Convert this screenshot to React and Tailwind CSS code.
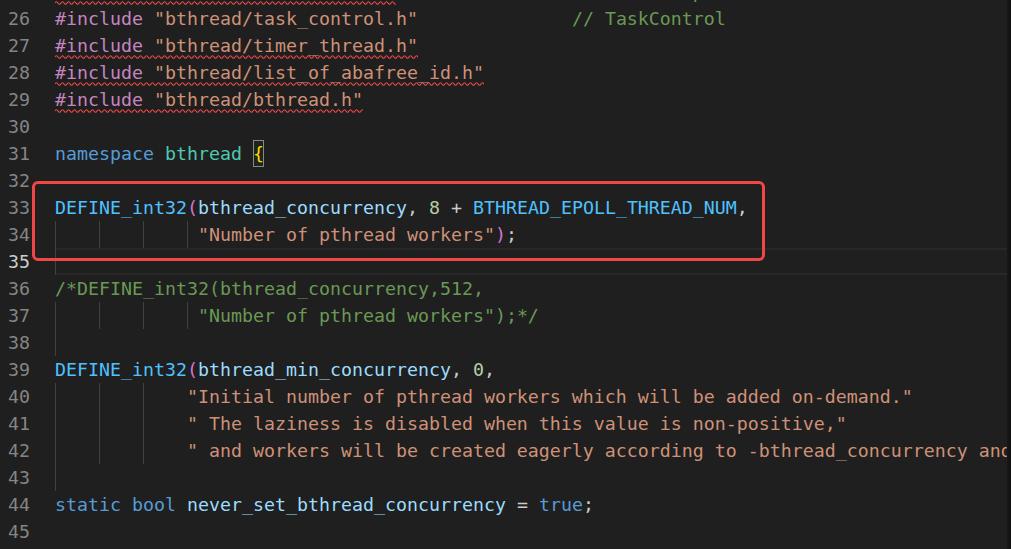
import React from "react";

const C = {
  inc: "text-[#C586C0]",
  str: "text-[#CE9178]",
  com: "text-[#6A9955]",
  kw: "text-[#569CD6]",
  ns: "text-[#4EC9B0]",
  gold: "text-[#FFD700]",
  orch: "text-[#DA70D6]",
  mac: "text-[#4FC1FF]",
  v: "text-[#9CDCFE]",
  num: "text-[#B5CEA8]",
  p: "text-[#CCCCCC]",
};

const lines = [
  { n: 25, hideNum: true, toks: [[C.p, "                                               "], [C.com, "// TaskGroup"]], sq: 31 },
  { n: 26, toks: [[C.inc, "#include "], [C.str, '"bthread/task_control.h"'], [C.p, "              "], [C.com, "// TaskControl"]] },
  { n: 27, toks: [[C.inc, "#include "], [C.str, '"bthread/timer_thread.h"']], sq: 33 },
  { n: 28, toks: [[C.inc, "#include "], [C.str, '"bthread/list_of_abafree_id.h"']], sq: 39 },
  { n: 29, toks: [[C.inc, "#include "], [C.str, '"bthread/bthread.h"']], sq: 28 },
  { n: 30, toks: [] },
  { n: 31, toks: [[C.kw, "namespace"], [C.p, " "], [C.ns, "bthread"], [C.p, " "], [C.gold, "{"]], box: 18 },
  { n: 32, toks: [] },
  { n: 33, toks: [[C.mac, "DEFINE_int32"], [C.orch, "("], [C.v, "bthread_concurrency"], [C.p, ", "], [C.num, "8"], [C.p, " + "], [C.mac, "BTHREAD_EPOLL_THREAD_NUM"], [C.p, ","]] },
  { n: 34, toks: [[C.p, "             "], [C.str, '"Number of pthread workers"'], [C.orch, ")"], [C.p, ";"]], g: [0, 4, 8, 12] },
  { n: 35, toks: [], g: [0], cur: true },
  { n: 36, toks: [[C.com, "/*DEFINE_int32(bthread_concurrency,512,"]] },
  { n: 37, toks: [[C.p, "             "], [C.com, '"Number of pthread workers");*/']], g: [0, 4, 8, 12] },
  { n: 38, toks: [], g: [0] },
  { n: 39, toks: [[C.mac, "DEFINE_int32"], [C.orch, "("], [C.v, "bthread_min_concurrency"], [C.p, ", "], [C.num, "0"], [C.p, ","]] },
  { n: 40, toks: [[C.p, "            "], [C.str, '"Initial number of pthread workers which will be added on-demand."']], g: [0, 4, 8] },
  { n: 41, toks: [[C.p, "            "], [C.str, '" The laziness is disabled when this value is non-positive,"']], g: [0, 4, 8] },
  { n: 42, toks: [[C.p, "            "], [C.str, '" and workers will be created eagerly according to -bthread_concurrency and"']], g: [0, 4, 8] },
  { n: 43, toks: [], g: [0] },
  { n: 44, toks: [[C.kw, "static"], [C.p, " "], [C.kw, "bool"], [C.p, " "], [C.v, "never_set_bthread_concurrency"], [C.p, " = "], [C.kw, "true"], [C.p, ";"]] },
  { n: 45, toks: [] },
];

function Squiggle({ chars }) {
  const w = chars * 11;
  let d = "M0 2";
  for (let x = 0; x < w; x += 6) {
    d += ` Q${x + 1.5} -0.5 ${x + 3} 2 T${x + 6} 2`;
  }
  return (
    <svg
      className="absolute left-0 bottom-[0px]"
      width={w}
      height="5"
      viewBox={`0 -1 ${w} 5`}
    >
      <path d={d} fill="none" stroke="#f14c4c" strokeWidth="1.1" />
    </svg>
  );
}

function Row({ line }) {
  return (
    <div className="flex h-[27px] shrink-0">
      <div
        className={`w-[55px] shrink-0 pr-[25px] text-right leading-[27px] ${
          line.cur ? "text-[#CCCCCC]" : "text-[#858585]"
        }`}
      >
        {line.hideNum ? "" : line.n}
      </div>
      <div className="relative flex-1 leading-[27px] whitespace-pre">
        {line.cur && (
          <div className="absolute inset-0 border-y-2 border-[#282828]" />
        )}
        {(line.g || []).map((c) => (
          <div
            key={c}
            className="absolute top-0 bottom-0 w-px bg-[#404040]"
            style={{ left: c * 11 }}
          />
        ))}
        {line.box !== undefined && (
          <div
            className="absolute top-0 bottom-0 w-[11px] border border-[#888888] bg-[#0064001a]"
            style={{ left: line.box * 11 }}
          />
        )}
        {line.sq && <Squiggle chars={line.sq} />}
        <span className="relative">
          {line.toks.map(([cls, txt], i) => (
            <span key={i} className={cls}>
              {txt}
            </span>
          ))}
        </span>
      </div>
    </div>
  );
}

export default function App() {
  return (
    <div
      className="relative flex w-[1011px] h-[549px] overflow-hidden bg-[#1f1f1f] text-[18.27px]"
      style={{ fontFamily: '"DejaVu Sans Mono", "Liberation Mono", monospace' }}
    >
      <div className="flex-1 overflow-hidden">
        <div className="flex flex-col mt-[-22px]">
          {lines.map((l) => (
            <Row key={l.n} line={l} />
          ))}
        </div>
      </div>
      <div className="w-[4px] shrink-0 bg-gradient-to-r from-[#181818] to-[#101010]" />
      <div className="absolute left-[32px] top-[181px] w-[733px] h-[80px] border-[3px] border-[#f04646] rounded-[6px]" />
    </div>
  );
}
